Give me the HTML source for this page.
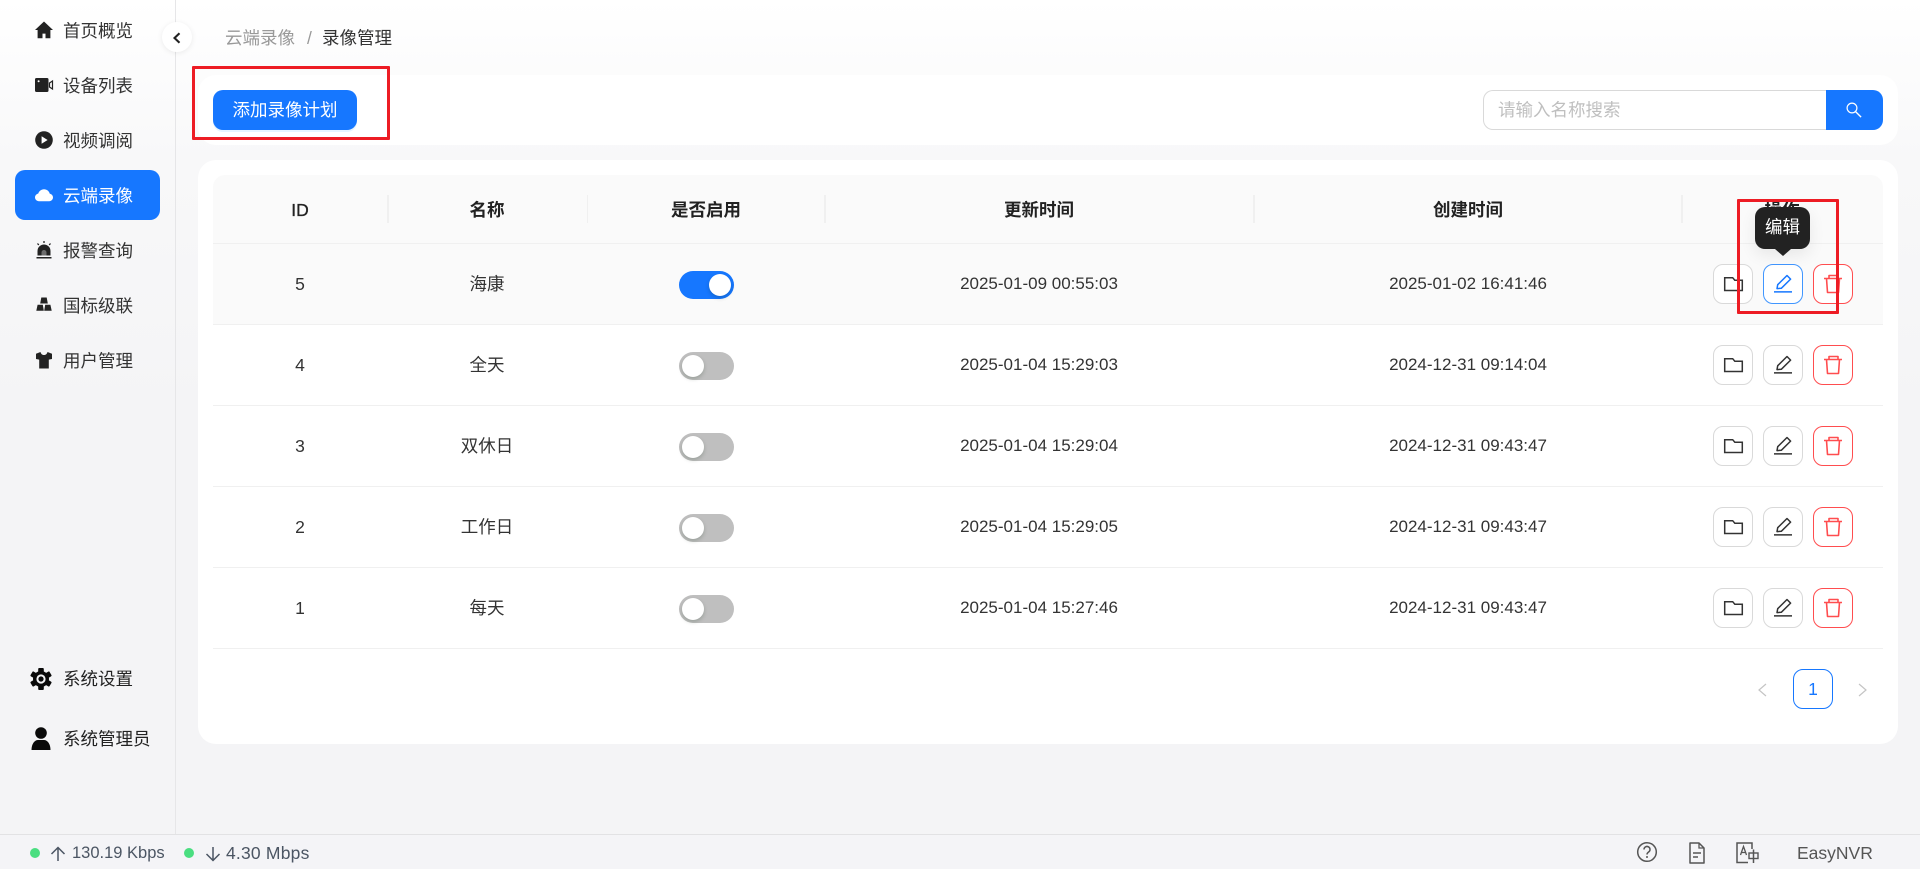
<!DOCTYPE html>
<html lang="zh">
<head>
<meta charset="utf-8">
<title>云端录像</title>
<style>
html,body{margin:0;padding:0;width:1920px;height:869px;overflow:hidden}
body{position:relative;background:linear-gradient(180deg,#fff 0,#f8f8f9 160px,#f4f4f6 420px);font-family:"Liberation Sans","Noto Sans CJK SC",sans-serif;font-size:17.5px;color:#333}
.a{position:absolute;white-space:nowrap}
.side{position:absolute;left:175px;top:0;width:1px;height:834px;background:#e6e6e8}
.mi{position:absolute;left:63px;height:30px;line-height:30px;white-space:nowrap;color:#333}
.ic{position:absolute;overflow:visible}
.active{position:absolute;left:15px;top:170px;width:145px;height:50px;background:#1677ff;border-radius:10px}
.collapse{position:absolute;left:162px;top:22px;width:30px;height:30px;border-radius:50%;background:#fff;box-shadow:0 1px 6px rgba(0,0,0,.08)}
.card{position:absolute;left:198px;width:1700px;background:#fff;border-radius:18px}
.btn{position:absolute;left:213px;top:90px;width:144px;height:40px;line-height:40px;background:#1677ff;color:#fff;border-radius:10px;text-align:center;box-shadow:0 2px 0 rgba(5,145,255,.1)}
.inp{position:absolute;left:1483px;top:90px;width:343px;height:40px;box-sizing:border-box;border:1px solid #d9d9d9;border-right:0;border-radius:10px 0 0 10px;background:#fff;line-height:38px;padding-left:14px;color:#bfbfbf}
.sbtn{position:absolute;left:1826px;top:90px;width:57px;height:40px;background:#1677ff;border-radius:0 10px 10px 0}
.thead{position:absolute;left:213px;top:175px;width:1670px;height:68px;background:#fafafa;border-radius:12px 12px 0 0;border-bottom:1px solid #f0f0f0}
.dv{position:absolute;top:195px;width:1.5px;height:28px;background:#f0f0f0}
.c{position:absolute;transform:translateX(-50%);white-space:nowrap;text-align:center}
.th{top:195px;line-height:30px;font-weight:700;color:#222}
.line{position:absolute;left:213px;width:1670px;height:1px;background:#f0f0f0}
.hover{position:absolute;left:213px;top:244px;width:1670px;height:80px;background:#fafafa}
.sw{position:absolute;left:679px;width:55px;height:28px;border-radius:14px;background:#bfbfbf}
.sw i{position:absolute;left:2.5px;top:3px;width:22px;height:22px;border-radius:50%;background:#fff;box-shadow:0 2px 4px rgba(0,35,11,.2)}
.sw.on{background:#1677ff}
.sw.on i{left:30px}
.ab{position:absolute;width:40px;height:40px;box-sizing:border-box;border:1px solid #d9d9d9;border-radius:10px;background:#fff}
.ab svg{position:absolute;left:-1px;top:-1px}
.ab.del{border-color:#ff4d4f}
.ab.ed{border-color:#4096ff}
.tip{position:absolute;left:1755px;top:207px;width:55px;height:42px;background:#222;border-radius:10px;color:#fff;text-align:center;line-height:40px;box-shadow:0 6px 16px rgba(0,0,0,.08)}
.tipa{position:absolute;left:1775px;top:249px;width:0;height:0;border-left:8px solid transparent;border-right:8px solid transparent;border-top:7px solid #222}
.red{position:absolute;box-sizing:border-box;border:3.5px solid #ed1c24;border-radius:1px}
.pg{position:absolute;left:1793px;top:669px;width:40px;height:40px;box-sizing:border-box;border:1px solid #1677ff;border-radius:10px;color:#1677ff;text-align:center;line-height:38px;font-weight:500}
.bar{position:absolute;left:0;top:834px;width:1920px;height:35px;background:#f4f4f7;border-top:1px solid #e2e2e4;box-sizing:border-box}
.st{position:absolute;top:838px;line-height:30px;color:#4b5563;white-space:nowrap}
.dot{position:absolute;top:848px;width:10px;height:10px;border-radius:50%;background:#4ade80}
</style>
</head>
<body>
<svg width="0" height="0" style="position:absolute">
<defs>
<g id="folder"><path d="M11.700 13.700h8l2.100 2.500h7.500v10.300H11.700z" fill="none" stroke-width="1.500" stroke-linejoin="miter"/></g>
<g id="pen"><path d="M14 24.600l.7-3.900 9.300-9.200 3.600 3.600-9.300 9.200z" fill="none" stroke-width="1.500" stroke-linejoin="round"/><path d="M11 27.900h18" fill="none" stroke-width="1.500"/></g>
<g id="trash"><path d="M11 14.500h18M16 14.500v-3h9v3M13.500 14.500l1 14h11l1-14" fill="none" stroke-width="1.600" stroke-linejoin="round"/></g>
</defs>
</svg>

<div class="side"></div>
<div class="active"></div>

<svg class="ic" style="left:35px;top:21px" width="18" height="18" viewBox="0 0 18 18"><path d="M9 0.500L0 9h2.600v8.200h4.900v-4.600h3v4.600h4.900V9H18z" fill="#222"/></svg>
<div class="mi" style="top:16px">首页概览</div>

<svg class="ic" style="left:35px;top:76px" width="18" height="18" viewBox="0 0 18 18"><rect x="0" y="2" width="13.500" height="14" rx="1.500" fill="#222"/><circle cx="3.600" cy="5.200" r="1" fill="#fff"/><path d="M14.500 7l3-2v8l-3-2z" fill="none" stroke="#222" stroke-width="1.200"/></svg>
<div class="mi" style="top:71px">设备列表</div>

<svg class="ic" style="left:35px;top:131px" width="18" height="18" viewBox="0 0 18 18"><circle cx="9" cy="9" r="8.800" fill="#222"/><path d="M6.600 5.200L12.600 9l-6 3.800z" fill="#fff"/></svg>
<div class="mi" style="top:126px">视频调阅</div>

<svg class="ic" style="left:35px;top:186px" width="18" height="18" viewBox="0 0 18 18"><path d="M4 15.200C1.800 15.200 0 13.600 0 11.400c0-1.900 1.400-3.500 3.200-3.800C4 5 6.300 3.200 9 3.200c2.800 0 5.100 1.900 5.800 4.500 1.800.3 3.200 1.800 3.200 3.700 0 2.100-1.700 3.800-3.800 3.800z" fill="#fff"/></svg>
<div class="mi" style="top:181px;color:#fff">云端录像</div>

<svg class="ic" style="left:35px;top:241px" width="18" height="18" viewBox="0 0 18 18"><path d="M2.500 14.500V10a6.500 6.500 0 0 1 13 0v4.500z" fill="#222"/><path d="M6.500 14.500v-3a2.500 2.500 0 0 1 5 0v3z" fill="#f6f6f7" opacity=".35"/><rect x="1.500" y="16" width="15" height="1.500" fill="#222"/><path d="M9 0v2M2.500 2.500l1.300 1.500M15.500 2.500l-1.300 1.500" stroke="#222" stroke-width="1.300"/></svg>
<div class="mi" style="top:236px">报警查询</div>

<svg class="ic" style="left:35px;top:296px" width="18" height="18" viewBox="0 0 18 18"><path d="M6.300 1.500h5.400l1.100 6H5.200zM2.600 8.800h5.200l1 6H1.300zM10.200 8.800h5.200l1.300 6H9.200z" fill="#222"/></svg>
<div class="mi" style="top:291px">国标级联</div>

<svg class="ic" style="left:35px;top:351px" width="18" height="18" viewBox="0 0 18 18"><path d="M5.500 1L1 2.800v5.200l3.200.6V17.500h9.600V8.600L17 8V2.800L12.500 1C12 3.200 10.500 4 9 4S6 3.200 5.500 1z" fill="#222"/></svg>
<div class="mi" style="top:346px">用户管理</div>

<svg class="ic" style="left:30px;top:668px" width="22" height="22" viewBox="-11 -11 22 22"><circle r="8" fill="#0a0a0a"/><g fill="#0a0a0a"><rect x="-2.800" y="-11" width="5.600" height="22" rx="1"/><rect x="-2.800" y="-11" width="5.600" height="22" rx="1" transform="rotate(60)"/><rect x="-2.800" y="-11" width="5.600" height="22" rx="1" transform="rotate(120)"/></g><circle r="4.600" fill="#f4f4f6"/><circle r="2.600" fill="#0a0a0a"/></svg>
<div class="mi" style="top:664px;color:#222">系统设置</div>

<svg class="ic" style="left:31px;top:727px" width="20" height="24" viewBox="0 0 20 24"><circle cx="10" cy="6" r="5.800" fill="#0a0a0a"/><path d="M0.500 23c0-6 3-10 6.500-10h6c3.500 0 6.500 4 6.500 10z" fill="#0a0a0a"/></svg>
<div class="mi" style="top:724px;color:#222">系统管理员</div>

<div class="collapse"></div>
<svg class="ic" style="left:172px;top:32px" width="10" height="12" viewBox="0 0 10 12"><path d="M7.500 1.200L2.500 6l5 4.800" fill="none" stroke="#222" stroke-width="2.100"/></svg>

<div class="a" style="left:225px;top:23px;line-height:30px;color:#999">云端录像</div>
<div class="a" style="left:307px;top:23px;line-height:30px;color:#999">/</div>
<div class="a" style="left:322px;top:23px;line-height:30px;color:#333">录像管理</div>

<div class="card" style="top:75px;height:70px"></div>
<div class="btn">添加录像计划</div>
<div class="inp">请输入名称搜索</div>
<div class="sbtn"></div>
<svg class="ic" style="left:1844px;top:100px" width="20" height="20" viewBox="0 0 20 20"><circle cx="8" cy="8" r="4.900" fill="none" stroke="#fff" stroke-width="1.200"/><path d="M11.700 11.700l5.400 5.400" stroke="#fff" stroke-width="1.400"/></svg>

<div class="card" style="top:160px;height:584px"></div>
<div class="thead"></div>
<div class="hover"></div>
<div class="dv" style="left:387px"></div>
<div class="dv" style="left:586.500px"></div>
<div class="dv" style="left:824px"></div>
<div class="dv" style="left:1253px"></div>
<div class="dv" style="left:1681px"></div>

<div class="c th" style="left:300px;font-weight:400;-webkit-text-stroke:.3px #222">ID</div>
<div class="c th" style="left:487px">名称</div>
<div class="c th" style="left:706px">是否启用</div>
<div class="c th" style="left:1039px">更新时间</div>
<div class="c th" style="left:1468px">创建时间</div>
<div class="c th" style="left:1782px">操作</div>

<div class="line" style="top:324px"></div>
<div class="line" style="top:405px"></div>
<div class="line" style="top:486px"></div>
<div class="line" style="top:567px"></div>
<div class="line" style="top:648px"></div>

<!-- row 5 -->
<div class="c" style="left:300px;top:269px;line-height:30px">5</div>
<div class="c" style="left:487px;top:269px;line-height:30px">海康</div>
<div class="sw on" style="top:271px"><i></i></div>
<div class="c" style="left:1039px;top:269px;line-height:30px;font-size:17px">2025-01-09 00:55:03</div>
<div class="c" style="left:1468px;top:269px;line-height:30px;font-size:17px">2025-01-02 16:41:46</div>
<div class="ab" style="left:1713px;top:264px"><svg width="40" height="40" stroke="#333"><use href="#folder"/></svg></div>
<div class="ab ed" style="left:1763px;top:264px"><svg width="40" height="40" stroke="#1677ff"><use href="#pen"/></svg></div>
<div class="ab del" style="left:1813px;top:264px"><svg width="40" height="40" stroke="#ff4d4f"><use href="#trash"/></svg></div>

<!-- row 4 -->
<div class="c" style="left:300px;top:350px;line-height:30px">4</div>
<div class="c" style="left:487px;top:350px;line-height:30px">全天</div>
<div class="sw" style="top:352px"><i></i></div>
<div class="c" style="left:1039px;top:350px;line-height:30px;font-size:17px">2025-01-04 15:29:03</div>
<div class="c" style="left:1468px;top:350px;line-height:30px;font-size:17px">2024-12-31 09:14:04</div>
<div class="ab" style="left:1713px;top:345px"><svg width="40" height="40" stroke="#333"><use href="#folder"/></svg></div>
<div class="ab" style="left:1763px;top:345px"><svg width="40" height="40" stroke="#333"><use href="#pen"/></svg></div>
<div class="ab del" style="left:1813px;top:345px"><svg width="40" height="40" stroke="#ff4d4f"><use href="#trash"/></svg></div>

<!-- row 3 -->
<div class="c" style="left:300px;top:431px;line-height:30px">3</div>
<div class="c" style="left:487px;top:431px;line-height:30px">双休日</div>
<div class="sw" style="top:433px"><i></i></div>
<div class="c" style="left:1039px;top:431px;line-height:30px;font-size:17px">2025-01-04 15:29:04</div>
<div class="c" style="left:1468px;top:431px;line-height:30px;font-size:17px">2024-12-31 09:43:47</div>
<div class="ab" style="left:1713px;top:426px"><svg width="40" height="40" stroke="#333"><use href="#folder"/></svg></div>
<div class="ab" style="left:1763px;top:426px"><svg width="40" height="40" stroke="#333"><use href="#pen"/></svg></div>
<div class="ab del" style="left:1813px;top:426px"><svg width="40" height="40" stroke="#ff4d4f"><use href="#trash"/></svg></div>

<!-- row 2 -->
<div class="c" style="left:300px;top:512px;line-height:30px">2</div>
<div class="c" style="left:487px;top:512px;line-height:30px">工作日</div>
<div class="sw" style="top:514px"><i></i></div>
<div class="c" style="left:1039px;top:512px;line-height:30px;font-size:17px">2025-01-04 15:29:05</div>
<div class="c" style="left:1468px;top:512px;line-height:30px;font-size:17px">2024-12-31 09:43:47</div>
<div class="ab" style="left:1713px;top:507px"><svg width="40" height="40" stroke="#333"><use href="#folder"/></svg></div>
<div class="ab" style="left:1763px;top:507px"><svg width="40" height="40" stroke="#333"><use href="#pen"/></svg></div>
<div class="ab del" style="left:1813px;top:507px"><svg width="40" height="40" stroke="#ff4d4f"><use href="#trash"/></svg></div>

<!-- row 1 -->
<div class="c" style="left:300px;top:593px;line-height:30px">1</div>
<div class="c" style="left:487px;top:593px;line-height:30px">每天</div>
<div class="sw" style="top:595px"><i></i></div>
<div class="c" style="left:1039px;top:593px;line-height:30px;font-size:17px">2025-01-04 15:27:46</div>
<div class="c" style="left:1468px;top:593px;line-height:30px;font-size:17px">2024-12-31 09:43:47</div>
<div class="ab" style="left:1713px;top:588px"><svg width="40" height="40" stroke="#333"><use href="#folder"/></svg></div>
<div class="ab" style="left:1763px;top:588px"><svg width="40" height="40" stroke="#333"><use href="#pen"/></svg></div>
<div class="ab del" style="left:1813px;top:588px"><svg width="40" height="40" stroke="#ff4d4f"><use href="#trash"/></svg></div>

<svg class="ic" style="left:1755px;top:682px" width="14" height="16" viewBox="0 0 14 16"><path d="M11 2L4 8l7 6" fill="none" stroke="#c4c4c4" stroke-width="1.200"/></svg>
<div class="pg">1</div>
<svg class="ic" style="left:1856px;top:682px" width="14" height="16" viewBox="0 0 14 16"><path d="M3 2l7 6-7 6" fill="none" stroke="#c4c4c4" stroke-width="1.200"/></svg>

<div class="tip">编辑</div>
<div class="tipa"></div>

<div class="red" style="left:192px;top:66px;width:198px;height:74px"></div>
<div class="red" style="left:1737px;top:199px;width:102px;height:115px"></div>

<div class="bar"></div>
<div class="dot" style="left:30px"></div>
<svg class="ic" style="left:50px;top:845px" width="16" height="18" viewBox="0 0 16 18"><path d="M8 16V2.500M1.500 9L8 2.500 14.500 9" fill="none" stroke="#4b5563" stroke-width="1.500"/></svg>
<div class="st" style="left:72px;font-size:16.500px">130.19 Kbps</div>
<div class="dot" style="left:184px"></div>
<svg class="ic" style="left:205px;top:845px" width="16" height="18" viewBox="0 0 16 18"><path d="M8 2v13.500M1.500 9L8 15.500 14.500 9" fill="none" stroke="#4b5563" stroke-width="1.500"/></svg>
<div class="st" style="left:226px;letter-spacing:.2px">4.30 Mbps</div>

<svg class="ic" style="left:1636px;top:841px" width="22" height="22" viewBox="0 0 22 22"><circle cx="11" cy="11" r="9.300" fill="none" stroke="#555" stroke-width="1.500"/><path d="M8 8.500a3 3 0 1 1 4.600 2.500c-1 .7-1.600 1.200-1.600 2.500" fill="none" stroke="#555" stroke-width="1.500"/><circle cx="11" cy="16" r="1" fill="#555"/></svg>
<svg class="ic" style="left:1688px;top:842px" width="18" height="22" viewBox="0 0 18 22"><path d="M2 1h9l5 5v15H2z" fill="none" stroke="#555" stroke-width="1.500" stroke-linejoin="round"/><path d="M11 1v5h5" fill="none" stroke="#555" stroke-width="1.300"/><path d="M5 11h8M5 15h5" stroke="#555" stroke-width="1.500"/></svg>
<svg class="ic" style="left:1736px;top:842px" width="24" height="22" viewBox="0 0 24 22"><path d="M16 7V1H1v19.500h11" fill="none" stroke="#555" stroke-width="1.500"/><path d="M4.500 13L7.500 4.500 10.500 13M5.500 10.500h4" fill="none" stroke="#555" stroke-width="1.300"/><rect x="13" y="11" width="9" height="5.500" fill="none" stroke="#555" stroke-width="1.400"/><path d="M17.500 7.500V21" stroke="#555" stroke-width="1.500"/></svg>
<div class="st" style="left:1797px;color:#555">EasyNVR</div>
</body>
</html>
